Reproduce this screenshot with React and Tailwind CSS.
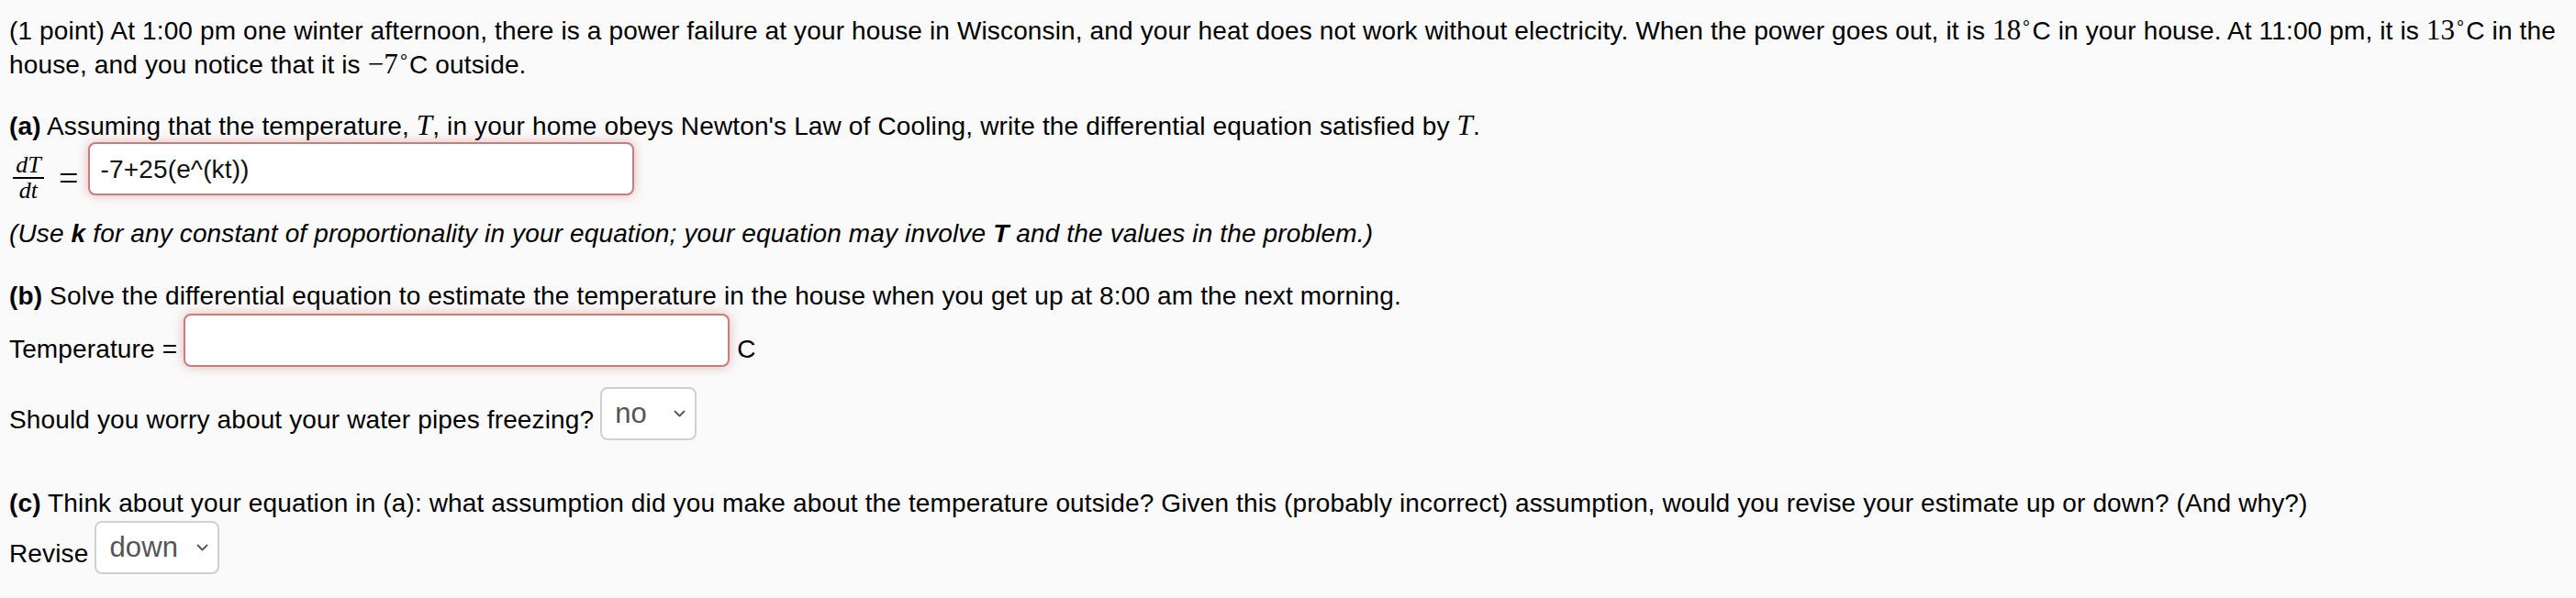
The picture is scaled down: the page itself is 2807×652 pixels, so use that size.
import React from 'react';

const sans = { fontFamily: '"Liberation Sans", Arial, Helvetica, sans-serif' };

const Math = ({ children, italic }) => (
  <span className={`font-['Liberation_Serif',serif] text-[31px] leading-none ${italic ? 'italic' : ''}`}>
    {children}
  </span>
);

const Deg = () => (
  <span className="font-['Liberation_Serif',serif] text-[19px] leading-[0] relative top-[-12px]">∘</span>
);

const Chevron = () => (
  <svg width="13" height="9" viewBox="0 0 13 9" fill="none" className="shrink-0">
    <path d="M1.5 1.5 L6.5 6.5 L11.5 1.5" stroke="#555" strokeWidth="1.8" strokeLinecap="round" strokeLinejoin="round" />
  </svg>
);

const Select = ({ value, width }) => (
  <div className={`flex items-center justify-between h-[58px] ${width} ml-[7px] pl-[14px] pr-[10px] bg-white border-2 border-[#d0d0d0] rounded-[8px] text-[#555] text-[31px]`}>
    <span className="leading-none mt-[-2px]">{value}</span>
    <Chevron />
  </div>
);

const Field = ({ value, className }) => (
  <div className={`h-[58px] w-[595px] bg-white border-2 border-[#c87c7c] rounded-[8px] shadow-[0_0_12px_rgba(205,115,115,0.5)] flex items-center pl-[12px] text-[28px] text-[#111] ${className}`}>
    {value}
  </div>
);

export default function App() {
  return (
    <div style={sans} className="min-h-[652px] bg-[#fafafa] text-black text-[28px] leading-[37px] tracking-[0.14px] pt-[15px] pl-[10px]">
      {/* intro */}
      <div className="whitespace-nowrap">
        (1 point) At 1:00 pm one winter afternoon, there is a power failure at your house in Wisconsin, and your heat does not work without electricity. When the power goes out, it is <Math>18</Math><Deg />C in your house. At 11:00 pm, it is <Math>13</Math><Deg />C in the
      </div>
      <div className="whitespace-nowrap">
        house, and you notice that it is <Math>−7</Math><Deg />C outside.
      </div>

      {/* part a */}
      <div className="mt-[30px] whitespace-nowrap">
        <b>(a)</b> Assuming that the temperature, <Math italic>T</Math>, in your home obeys Newton's Law of Cooling, write the differential equation satisfied by <Math italic>T</Math>.
      </div>
      <div className="mt-[-1px] flex items-start h-[58px]">
        <div className="mt-[13px] ml-[4px] flex items-center font-['Liberation_Serif',serif] italic">
          <div className="flex flex-col items-center w-[34px]">
            <span className="text-[26px] leading-[24px]">dT</span>
            <span className="h-[2px] w-full bg-black my-[1px]" />
            <span className="text-[26px] leading-[24px]">dt</span>
          </div>
          <span className="not-italic text-[38px] leading-none ml-[16px] mr-[10px]">=</span>
        </div>
        <Field value="-7+25(e^(kt))" />
      </div>
      <div className="mt-[23px] italic whitespace-nowrap">
        (Use <b>k</b> for any constant of proportionality in your equation; your equation may involve <b>T</b> and the values in the problem.)
      </div>

      {/* part b */}
      <div className="mt-[31px] whitespace-nowrap">
        <b>(b)</b> Solve the differential equation to estimate the temperature in the house when you get up at 8:00 am the next morning.
      </div>
      <div className="mt-[1px] flex items-end h-[58px]">
        <span className="mb-[1px] whitespace-nowrap">Temperature =</span>
        <Field value="" className="ml-[7px]" />
        <span className="mb-[1px] ml-[8px]">C</span>
      </div>
      <div className="mt-[22px] flex items-end h-[58px]">
        <span className="mb-[4px] whitespace-nowrap">Should you worry about your water pipes freezing?</span>
        <Select value="no" width="w-[105px]" />
      </div>

      {/* part c */}
      <div className="mt-[50px] whitespace-nowrap">
        <b>(c)</b> Think about your equation in (a): what assumption did you make about the temperature outside? Given this (probably incorrect) assumption, would you revise your estimate up or down? (And why?)
      </div>
      <div className="mt-[1px] flex items-end h-[58px]">
        <span className="mb-[4px]">Revise</span>
        <Select value="down" width="w-[136px]" />
      </div>
    </div>
  );
}
